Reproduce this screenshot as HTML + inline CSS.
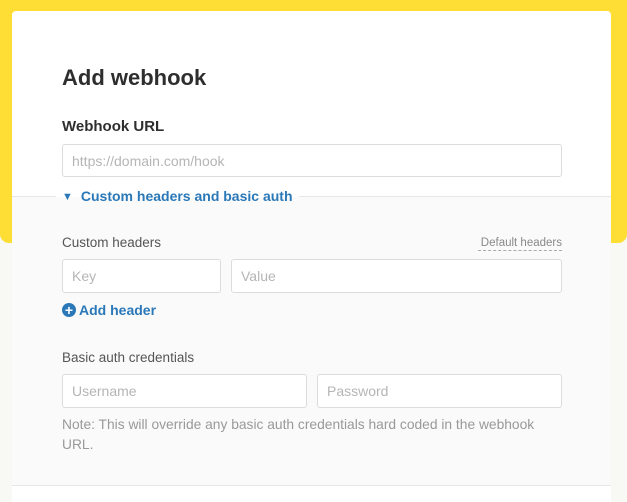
<!DOCTYPE html>
<html><head><meta charset="utf-8"><style>
*{box-sizing:border-box;margin:0;padding:0}
body{width:627px;height:502px;overflow:hidden;background:#f8f8f4;font-family:"Liberation Sans",Arial,sans-serif;position:relative}
.y{position:absolute;left:0;top:0;width:627px;height:243px;background:#fedd34;border-radius:0 0 9px 9px}
.card{position:absolute;left:12px;top:11px;width:599px;height:491px;background:#fff;border-radius:4px 4px 0 0;overflow:hidden}
.gray{position:absolute;left:0;top:185px;width:599px;height:290px;background:#fafafa;border-top:1px solid #e6e6e6;border-bottom:1px solid #e6e6e6}
.abs{position:absolute}
h1{position:absolute;left:50px;top:54px;font-size:22px;font-weight:bold;color:#2e2e2e}
.lbl{position:absolute;left:50px;top:107px;font-size:15px;font-weight:bold;color:#2e2e2e}
.in{position:absolute;background:#fff;border:1px solid #dcdcdc;border-radius:3px;font-size:14px;color:#b5b5b5;padding-left:9px;display:flex;align-items:center}
.sm{font-size:13.5px;color:#555}
.link{color:#2a78b8;font-weight:bold;font-size:14px}
</style></head><body>
<div class="y"></div>
<div class="card">
<h1>Add webhook</h1>
<div class="lbl">Webhook URL</div>
<div class="in" style="left:50px;top:133px;width:500px;height:33px">https://domain.com/hook</div>
<div class="gray"></div>
<div class="abs" style="left:44px;top:177px;padding:0 6px;height:18px;background:linear-gradient(#fff 50%,#fafafa 50%)"><span class="link" style="font-size:11px;margin-right:8px;position:relative;top:-1px">▼</span><span class="link">Custom headers and basic auth</span></div>
<div class="abs sm" style="left:50px;top:224px">Custom headers</div>
<div class="abs" style="left:466px;top:226px;font-size:11.5px;color:#888;border-bottom:1px dashed #aaa;line-height:13px;width:84px;text-align:right">Default headers</div>
<div class="in" style="left:50px;top:248px;width:159px;height:34px">Key</div>
<div class="in" style="left:219px;top:248px;width:331px;height:34px">Value</div>
<div class="abs" style="left:50px;top:291px;display:flex;align-items:center"><span style="width:14px;height:14px;border-radius:50%;background:#2a78b8;color:#fff;font-size:14px;font-weight:bold;line-height:14px;text-align:center;margin-right:3px">+</span><span class="link">Add header</span></div>
<div class="abs sm" style="left:50px;top:339px">Basic auth credentials</div>
<div class="in" style="left:50px;top:363px;width:245px;height:34px">Username</div>
<div class="in" style="left:305px;top:363px;width:245px;height:34px">Password</div>
<div class="abs" style="left:50px;top:404px;width:488px;font-size:13.8px;line-height:20px;color:#999">Note: This will override any basic auth credentials hard coded in the webhook URL.</div>
</div>
</body></html>
